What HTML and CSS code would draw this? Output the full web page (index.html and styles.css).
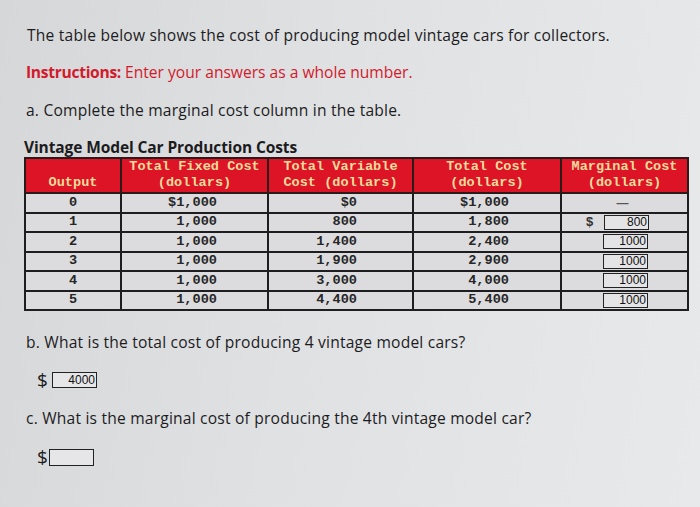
FILE: index.html
```html
<!DOCTYPE html>
<html>
<head>
<meta charset="utf-8">
<link rel="stylesheet" href="styles.css">
</head>
<body>
<div class="page">
  <p class="line intro">The table below shows the cost of producing model vintage cars for collectors.</p>
  <p class="line instr"><b>Instructions:</b> Enter your answers as a whole number.</p>
  <p class="line parta">a. Complete the marginal cost column in the table.</p>
  <p class="caption">Vintage Model Car Production Costs</p>
  <table class="costs">
    <colgroup>
      <col class="c1"><col class="c2"><col class="c3"><col class="c4"><col class="c5">
    </colgroup>
    <thead>
      <tr>
        <th class="bottom">Output</th>
        <th>Total Fixed Cost<br>(dollars)</th>
        <th>Total Variable<br>Cost (dollars)</th>
        <th>Total Cost<br>(dollars)</th>
        <th>Marginal Cost<br>(dollars)</th>
      </tr>
    </thead>
    <tbody>
      <tr><td class="out">0</td><td class="num fx">$1,000</td><td class="num vr">$0</td><td class="num tc">$1,000</td><td class="mc dash">—</td></tr>
      <tr><td class="out">1</td><td class="num fx">1,000</td><td class="num vr">800</td><td class="num tc">1,800</td><td class="mc"><div class="mcwrap"><span class="dollar">$</span><span class="box first">800</span></div></td></tr>
      <tr><td class="out">2</td><td class="num fx">1,000</td><td class="num vr">1,400</td><td class="num tc">2,400</td><td class="mc"><div class="mcwrap"><span class="dollar"></span><span class="box">1000</span></div></td></tr>
      <tr><td class="out">3</td><td class="num fx">1,000</td><td class="num vr">1,900</td><td class="num tc">2,900</td><td class="mc"><div class="mcwrap"><span class="dollar"></span><span class="box">1000</span></div></td></tr>
      <tr><td class="out">4</td><td class="num fx">1,000</td><td class="num vr">3,000</td><td class="num tc">4,000</td><td class="mc"><div class="mcwrap"><span class="dollar"></span><span class="box">1000</span></div></td></tr>
      <tr><td class="out">5</td><td class="num fx">1,000</td><td class="num vr">4,400</td><td class="num tc">5,400</td><td class="mc"><div class="mcwrap"><span class="dollar"></span><span class="box">1000</span></div></td></tr>
    </tbody>
  </table>
  <p class="line partb">b. What is the total cost of producing 4 vintage model cars?</p>
  <div class="answer ans-b"><span class="bigdollar">$</span><span class="abox">4000</span></div>
  <p class="line partc">c. What is the marginal cost of producing the 4th vintage model car?</p>
  <div class="answer ans-c"><span class="bigdollar">$</span><span class="abox"></span></div>
</div>
</body>
</html>
```

FILE: styles.css
```css
html, body {
  margin: 0;
  padding: 0;
}
body {
  width: 700px;
  height: 507px;
  overflow: hidden;
  background: linear-gradient(100deg, #d6d7d9 0%, #e0e1e3 45%, #e8e9eb 100%);
  font-family: "Open Sans", Lato, "Liberation Sans", sans-serif;
  color: #1c1c1e;
}
.page {
  padding: 25px 0 0 26px;
}
.line {
  margin: 0;
  font-size: 15.6px;
  line-height: 20px;
  letter-spacing: 0.2px;
}
.intro { margin-left: 1px; }
.instr {
  margin-top: 17px;
  color: #d31a2c;
  letter-spacing: 0;
}
.instr b { font-weight: 700; letter-spacing: -0.3px; }
.parta { margin-top: 18px; }
.caption {
  margin: 17px 0 0 -2px;
  font-size: 15.5px;
  font-weight: 700;
  line-height: 20px;
  letter-spacing: -0.1px;
}
.costs {
  margin-left: -2px;
  width: 663px;
  border-collapse: collapse;
  table-layout: fixed;
  font-family: "Liberation Mono", "Courier New", monospace;
  font-weight: 700;
  font-size: 13.6px;
}
.c1 { width: 96px; }
.c2 { width: 147px; }
.c3 { width: 145px; }
.c4 { width: 148px; }
.c5 { width: 127px; }
.costs th {
  background: #dc1426;
  color: #f6dc9c;
  border: 2px solid #2a1a1a;
  height: 31px;
  padding: 0 0 1px;
  line-height: 16px;
  font-weight: 700;
  vertical-align: middle;
}
.costs th.bottom { vertical-align: bottom; }
.costs td {
  background: #dcdcde;
  border: 2px solid #1e1e20;
  height: 17.5px;
  padding: 0;
  line-height: 16px;
  color: #262628;
}
.out { text-align: center; }
.num { text-align: right; }
.fx { padding-right: 50px !important; }
.vr { padding-right: 55px !important; }
.tc { padding-right: 51px !important; }
.mc.dash {
  text-align: center;
  padding-right: 4px !important;
  font-family: "Liberation Sans", Arial, sans-serif;
  font-size: 12px;
  color: #555;
}
.mcwrap {
  display: flex;
  align-items: center;
  padding-left: 24px;
  font-family: "Liberation Sans", Arial, sans-serif;
  font-weight: 400;
  font-size: 12px;
}
.dollar {
  width: 17px;
  font-size: 13px;
  font-weight: 700;
  color: #333;
}
.box {
  width: 42px;
  height: 13px;
  line-height: 13px;
  border: 1.5px solid #222;
  background: #e4e4e6;
  text-align: right;
  padding-right: 1px;
  color: #111;
}
.box.first { margin-left: 1px; }
.partb { margin-top: 21px; margin-left: 0; }
.answer {
  display: flex;
  align-items: center;
  height: 18px;
  margin-left: 11px;
}
.ans-b { margin-top: 19px; }
.ans-c { margin-top: 20px; }
.bigdollar {
  font-size: 19px;
  width: 15px;
  line-height: 18px;
}
.abox {
  width: 42px;
  height: 14px;
  line-height: 14px;
  border: 1.5px solid #222;
  background: #e6e6e8;
  text-align: right;
  padding-right: 1px;
  font-family: "Liberation Sans", Arial, sans-serif;
  font-size: 12px;
  color: #111;
}
.partc { margin-top: 19px; }
.ans-c .bigdollar { width: 12px; }
.ans-c .abox { height: 15px; }
```
